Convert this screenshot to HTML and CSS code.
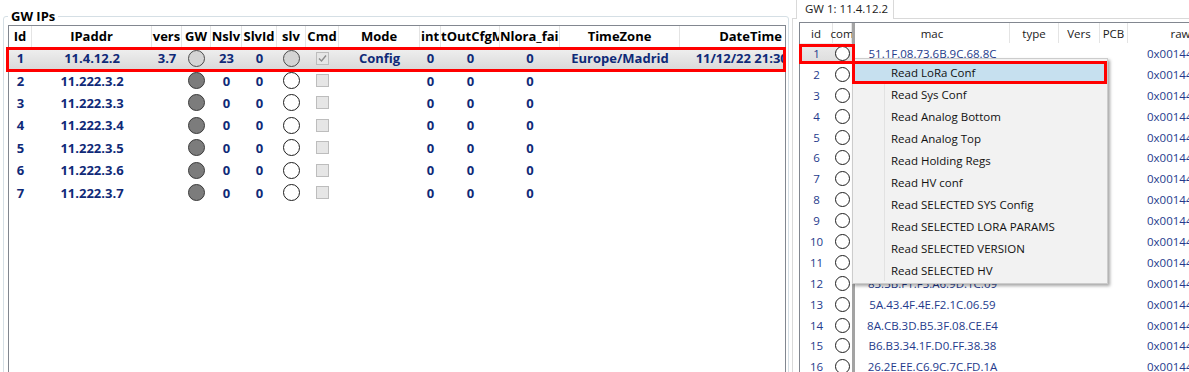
FILE: index.html
```html
<!DOCTYPE html>
<html>
<head>
    <title>GW IPs</title>
    <meta charset="utf-8">
    <link rel="stylesheet" href="styles.css">
</head>
<body>
<div id="app">
    <div class="left-panel">
        <fieldset class="group">
            <legend>GW IPs</legend>
            <div class="gw-grid">
                <div class="gw-row gw-header">
                    <div>Id</div><div>IPaddr</div><div>vers</div><div>GW</div><div>Nslv</div><div>SlvId</div><div>slv</div><div>Cmd</div><div>Mode</div><div>int</div><div>tOutCfgM</div><div>Nlora_fail</div><div>TimeZone</div><div>DateTime</div>
                </div>
                <div class="gw-row selected">
                    <div>1</div><div>11.4.12.2</div><div>3.7</div><div><span class="led led-light"></span></div><div>23</div><div>0</div><div><span class="led led-light"></span></div>
                    <div><span class="chk"><svg width="11" height="11" viewBox="0 0 11 11"><path d="M2 5.5 L4.5 8 L9 2.5" fill="none" stroke="#8c8c8c" stroke-width="1.4"/></svg></span></div>
                    <div>Config</div><div>0</div><div>0</div><div>0</div><div>Europe/Madrid</div><div>11/12/22 21:30:15</div>
                </div>
                <div class="gw-row">
                    <div>2</div><div>11.222.3.2</div><div></div><div><span class="led led-dark"></span></div><div>0</div><div>0</div><div><span class="led led-off"></span></div><div><span class="chk"></span></div><div></div><div>0</div><div>0</div><div>0</div><div></div><div></div>
                </div>
                <div class="gw-row">
                    <div>3</div><div>11.222.3.3</div><div></div><div><span class="led led-dark"></span></div><div>0</div><div>0</div><div><span class="led led-off"></span></div><div><span class="chk"></span></div><div></div><div>0</div><div>0</div><div>0</div><div></div><div></div>
                </div>
                <div class="gw-row">
                    <div>4</div><div>11.222.3.4</div><div></div><div><span class="led led-dark"></span></div><div>0</div><div>0</div><div><span class="led led-off"></span></div><div><span class="chk"></span></div><div></div><div>0</div><div>0</div><div>0</div><div></div><div></div>
                </div>
                <div class="gw-row">
                    <div>5</div><div>11.222.3.5</div><div></div><div><span class="led led-dark"></span></div><div>0</div><div>0</div><div><span class="led led-off"></span></div><div><span class="chk"></span></div><div></div><div>0</div><div>0</div><div>0</div><div></div><div></div>
                </div>
                <div class="gw-row">
                    <div>6</div><div>11.222.3.6</div><div></div><div><span class="led led-dark"></span></div><div>0</div><div>0</div><div><span class="led led-off"></span></div><div><span class="chk"></span></div><div></div><div>0</div><div>0</div><div>0</div><div></div><div></div>
                </div>
                <div class="gw-row">
                    <div>7</div><div>11.222.3.7</div><div></div><div><span class="led led-dark"></span></div><div>0</div><div>0</div><div><span class="led led-off"></span></div><div><span class="chk"></span></div><div></div><div>0</div><div>0</div><div>0</div><div></div><div></div>
                </div>
            </div>
        </fieldset>
    </div>

    <div class="right-panel">
        <div class="tabs">
            <div class="tab">GW 1: 11.4.12.2</div>
        </div>
        <div class="tab-body">
            <div class="mac-grid">
                <div class="mac-row mac-header">
                    <div>id</div><div class="com">com</div><div class="sep"></div><div>mac</div><div>type</div><div>Vers</div><div>PCB</div><div>raw</div>
                </div>
                <div class="mac-row selected">
                    <div>1</div><div><span class="led led-off small"></span></div><div class="sep"></div><div>51.1F.08.73.6B.9C.68.8C</div><div></div><div></div><div></div><div class="raw">0x0014400000001</div>
                </div>
                <div class="mac-row">
                    <div>2</div><div><span class="led led-off small"></span></div><div class="sep"></div><div>4C.02.7A.91.E3.5D.20.B7</div><div></div><div></div><div></div><div class="raw">0x0014400000001</div>
                </div>
                <div class="mac-row">
                    <div>3</div><div><span class="led led-off small"></span></div><div class="sep"></div><div>0D.6E.B2.48.19.C4.F7.33</div><div></div><div></div><div></div><div class="raw">0x0014400000001</div>
                </div>
                <div class="mac-row">
                    <div>4</div><div><span class="led led-off small"></span></div><div class="sep"></div><div>92.A1.5F.0C.7E.D8.44.16</div><div></div><div></div><div></div><div class="raw">0x0014400000001</div>
                </div>
                <div class="mac-row">
                    <div>5</div><div><span class="led led-off small"></span></div><div class="sep"></div><div>E7.3B.81.26.A9.0F.5C.D2</div><div></div><div></div><div></div><div class="raw">0x0014400000001</div>
                </div>
                <div class="mac-row">
                    <div>6</div><div><span class="led led-off small"></span></div><div class="sep"></div><div>1B.C9.64.F0.37.82.AE.5D</div><div></div><div></div><div></div><div class="raw">0x0014400000001</div>
                </div>
                <div class="mac-row">
                    <div>7</div><div><span class="led led-off small"></span></div><div class="sep"></div><div>70.4D.E2.9B.13.66.C8.0A</div><div></div><div></div><div></div><div class="raw">0x0014400000001</div>
                </div>
                <div class="mac-row">
                    <div>8</div><div><span class="led led-off small"></span></div><div class="sep"></div><div>A3.58.0E.D4.71.BF.29.94</div><div></div><div></div><div></div><div class="raw">0x0014400000001</div>
                </div>
                <div class="mac-row">
                    <div>9</div><div><span class="led led-off small"></span></div><div class="sep"></div><div>3E.F6.12.8C.5A.07.D1.6B</div><div></div><div></div><div></div><div class="raw">0x0014400000001</div>
                </div>
                <div class="mac-row">
                    <div>10</div><div><span class="led led-off small"></span></div><div class="sep"></div><div>C5.29.B8.4F.E0.73.1D.8E</div><div></div><div></div><div></div><div class="raw">0x0014400000001</div>
                </div>
                <div class="mac-row">
                    <div>11</div><div><span class="led led-off small"></span></div><div class="sep"></div><div>58.9A.D7.06.2C.E1.B4.4F</div><div></div><div></div><div></div><div class="raw">0x0014400000001</div>
                </div>
                <div class="mac-row">
                    <div>12</div><div><span class="led led-off small"></span></div><div class="sep"></div><div>83.3B.F1.F3.A6.9D.1C.09</div><div></div><div></div><div></div><div class="raw">0x0014400000001</div>
                </div>
                <div class="mac-row">
                    <div>13</div><div><span class="led led-off small"></span></div><div class="sep"></div><div>5A.43.4F.4E.F2.1C.06.59</div><div></div><div></div><div></div><div class="raw">0x0014400000001</div>
                </div>
                <div class="mac-row">
                    <div>14</div><div><span class="led led-off small"></span></div><div class="sep"></div><div>8A.CB.3D.B5.3F.08.CE.E4</div><div></div><div></div><div></div><div class="raw">0x0014400000001</div>
                </div>
                <div class="mac-row">
                    <div>15</div><div><span class="led led-off small"></span></div><div class="sep"></div><div>B6.B3.34.1F.D0.FF.38.38</div><div></div><div></div><div></div><div class="raw">0x0014400000001</div>
                </div>
                <div class="mac-row">
                    <div>16</div><div><span class="led led-off small"></span></div><div class="sep"></div><div>26.2E.EE.C6.9C.7C.FD.1A</div><div></div><div></div><div></div><div class="raw">0x0014400000001</div>
                </div>
            </div>
        </div>
    </div>

    <ul class="context-menu">
        <li class="active">Read LoRa Conf</li>
        <li>Read Sys Conf</li>
        <li>Read Analog Bottom</li>
        <li>Read Analog Top</li>
        <li>Read Holding Regs</li>
        <li>Read HV conf</li>
        <li>Read SELECTED SYS Config</li>
        <li>Read SELECTED LORA PARAMS</li>
        <li>Read SELECTED VERSION</li>
        <li>Read SELECTED HV</li>
    </ul>

    <div class="mark mark-gw"></div>
    <div class="mark mark-id"></div>
    <div class="mark mark-menu"></div>
</div>
</body>
</html>
```

FILE: styles.css
```css
* {
    box-sizing: border-box;
}

body {
    margin: 0;
    font-family: "Open Sans", "Noto Sans", sans-serif;
    background-color: #fff;
    overflow: hidden;
}

#app {
    position: relative;
    display: flex;
    width: 1189px;
    height: 372px;
    overflow: hidden;
}

/* left: group box with gateways */
.left-panel {
    width: 789px;
    flex: none;
}

.group {
    margin: 8px 0 0 3px;
    padding: 0 2px 0 4px;
    border: 1px solid #d5dfe5;
    border-radius: 3px;
    height: 420px;
    min-width: 0;
}

.group legend {
    padding: 0 3px;
    font-size: 13px;
    font-weight: bold;
    line-height: 17px;
    color: #000;
}

.gw-grid {
    height: 380px;
    border: 1px solid #828790;
    overflow: hidden;
    font-size: 13px;
    font-weight: bold;
}

.gw-row {
    display: grid;
    grid-template-columns: 23px 120px 30px 29px 31px 35px 29px 33px 81px 21px 59px 60px 120px 142px;
    width: 813px;
    height: 22.4px;
    color: #0f2a78;
}

.gw-row > div {
    display: flex;
    align-items: center;
    justify-content: center;
    white-space: nowrap;
}

.gw-header {
    height: 21px;
    color: #000;
}

.gw-header > div {
    display: block;
    text-align: center;
    line-height: 20px;
    overflow: hidden;
    border-right: 1px solid #e4e4e4;
}

.gw-row.selected {
    background: linear-gradient(#f1f1f1, #dadada);
}

.led {
    display: inline-block;
    width: 17px;
    height: 17px;
    border-radius: 50%;
    border: 1px solid #3a3a3a;
}

.led-light {
    background-color: #d4d4d4;
    border-color: #4a4a4a;
}

.led-dark {
    background-color: #7c7c7c;
    border-color: #3a3a3a;
}

.led-off {
    background-color: #fff;
    border-color: #1e1e1e;
}

.led.small {
    width: 15px;
    height: 15px;
}

.chk {
    display: inline-flex;
    align-items: center;
    justify-content: center;
    width: 13px;
    height: 13px;
    border: 1px solid #bdbdbd;
    background-color: #e6e6e6;
}

/* right: tab with slave grid */
.right-panel {
    flex: 1;
    min-width: 0;
    padding-left: 3px;
}

.tabs {
    display: flex;
    height: 18px;
    padding-left: 4px;
}

.tab {
    position: relative;
    z-index: 1;
    width: 98px;
    height: 19px;
    padding-left: 8px;
    border: 1px solid #d9d9d9;
    border-top: none;
    border-bottom: none;
    background-color: #fff;
    font-size: 11.5px;
    line-height: 17px;
    white-space: nowrap;
    color: #1a1a1a;
}

.tab-body {
    height: 400px;
    padding: 3px 0 0 6px;
    border: 1px solid #d9d9d9;
    border-right: none;
}

.mac-grid {
    height: 380px;
    border: 1px solid #828790;
    border-right: none;
    overflow: hidden;
    font-size: 11.5px;
}

.mac-row {
    display: grid;
    grid-template-columns: 33px 19px 3px 155px 49px 41px 28px 106px;
    width: 434px;
    height: 20.9px;
    color: #243a8c;
}

.mac-row > div {
    display: flex;
    align-items: center;
    justify-content: center;
    white-space: nowrap;
}

.mac-row > .sep {
    background-color: #a3a3a3;
}

.mac-row > .raw {
    justify-content: flex-start;
    padding-left: 19px;
}

.mac-header {
    height: 20px;
    color: #1a1a1a;
}

.mac-header > div {
    border-right: 1px solid #e4e4e4;
    overflow: hidden;
}

.mac-header > .com {
    overflow: visible;
}

.mac-header > .sep {
    border-right: none;
}

.mac-row.selected > div:nth-child(-n+2) {
    background: linear-gradient(#ececec, #dcdcdc);
}

/* context menu */
.context-menu {
    position: absolute;
    left: 852px;
    top: 58px;
    width: 256px;
    margin: 0;
    padding: 3px 0 1px;
    list-style: none;
    background-color: #f2f2f2;
    border: 1px solid #cccccc;
    box-shadow: 2px 2px 3px rgba(0, 0, 0, 0.35);
    font-size: 11.5px;
    z-index: 2;
}

.context-menu::before {
    content: "";
    position: absolute;
    left: 31px;
    top: 2px;
    bottom: 2px;
    width: 1px;
    background-color: #e2e2e2;
}

.context-menu li {
    position: relative;
    height: 22px;
    margin: 0 1px;
    padding-left: 37px;
    line-height: 22px;
    color: #111;
    white-space: nowrap;
}

.context-menu li.active {
    background-color: #c6e0ef;
    border: 1px solid #a6cfe6;
    padding-left: 36px;
    line-height: 20px;
}

/* red highlight marks */
.mark {
    position: absolute;
    border: 3px solid #ff0000;
    z-index: 3;
}

.mark-gw {
    left: 6px;
    top: 47px;
    width: 780px;
    height: 25px;
}

.mark-id {
    left: 799px;
    top: 44px;
    width: 56px;
    height: 20px;
}

.mark-menu {
    left: 852px;
    top: 61px;
    width: 255px;
    height: 23px;
}
```
